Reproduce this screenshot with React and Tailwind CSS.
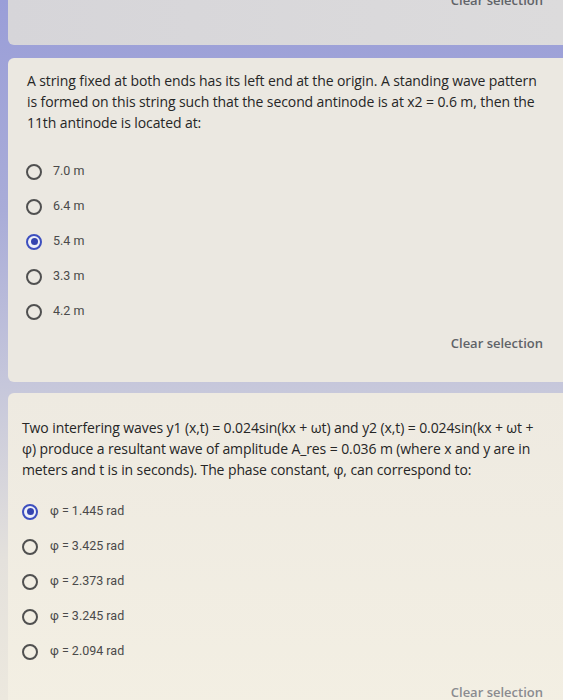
import React from "react";

const font = { fontFamily: '"Open Sans", "Liberation Sans", sans-serif' };

function Radio({ checked }) {
  if (checked) {
    return (
      <span className="flex h-[16px] w-[16px] shrink-0 items-center justify-center rounded-full border-2 border-[#3d4fbf] bg-[#eef0f8]">
        <span className="h-[7px] w-[7px] rounded-full bg-[#3444b0]" />
      </span>
    );
  }
  return <span className="h-[16px] w-[16px] shrink-0 rounded-full border-2 border-[#505050]" />;
}

function Option({ label, checked, gap }) {
  return (
    <div className={`flex h-[35px] items-center ${gap}`}>
      <Radio checked={checked} />
      <span className="text-[12.5px] text-[#4a4a4a] font-['Roboto',sans-serif]">{label}</span>
    </div>
  );
}

export default function App() {
  const q1 = ["7.0 m", "6.4 m", "5.4 m", "3.3 m", "4.2 m"];
  const q2 = ["φ = 1.445 rad", "φ = 3.425 rad", "φ = 2.373 rad", "φ = 3.245 rad", "φ = 2.094 rad"];
  return (
    <div
      className="h-[700px] w-[563px] overflow-hidden bg-[linear-gradient(to_bottom,#9a9ed8_0%,#a9acd8_30%,#c6c7db_55%,#e4e1dc_80%,#ece8de_100%)] pl-[8px]"
      style={font}
    >
      {/* top card */}
      <div className="flex h-[45px] justify-end rounded-bl-[6px] bg-[linear-gradient(to_right,#d6d5d9,#dcdbdc)] pr-[20px]">
        <span className="mt-[-10px] text-[13px] font-semibold leading-[20px] text-[#606368]">Clear selection</span>
      </div>
      <div className="h-[13px]" />
      {/* question 1 */}
      <div className="flex h-[324px] flex-col rounded-l-[6px] bg-[#ebe8e1] pt-[12px]">
        <p className="whitespace-nowrap pl-[19px] text-[14px] leading-[21px] tracking-[-0.1px] text-[#262626]">
          A string fixed at both ends has its left end at the origin. A standing wave pattern
          <br />
          is formed on this string such that the second antinode is at x2 = 0.6 m, then the
          <br />
          11th antinode is located at:
        </p>
        <div className="mt-[21px] flex flex-col pl-[18px]">
          {q1.map((l, i) => (
            <Option key={l} label={l} checked={i === 2} gap="gap-[11px]" />
          ))}
        </div>
        <div className="mt-[4px] flex justify-end pr-[20px]">
          <span className="text-[13px] font-semibold leading-[20px] text-[#5f6368]">Clear selection</span>
        </div>
      </div>
      <div className="h-[11px]" />
      {/* question 2 */}
      <div className="flex h-[320px] flex-col rounded-tl-[6px] bg-[linear-gradient(to_bottom,#eeeae1,#f3efe3)] pt-[24px]">
        <p className="whitespace-nowrap pl-[14px] text-[14px] leading-[21px] tracking-[-0.1px] text-[#262626]">
          Two interfering waves y1 (x,t) = 0.024sin(kx + ωt) and y2 (x,t) = 0.024sin(kx + ωt +
          <br />
          φ) produce a resultant wave of amplitude A_res = 0.036 m (where x and y are in
          <br />
          meters and t is in seconds). The phase constant, φ, can correspond to:
        </p>
        <div className="mt-[14px] flex flex-col pl-[14px]">
          {q2.map((l, i) => (
            <Option key={l} label={l} checked={i === 0} gap="gap-[12px]" />
          ))}
        </div>
        <div className="mt-[13px] flex justify-end pr-[20px]">
          <span className="text-[13px] font-semibold leading-[20px] text-[#8a8b90]">Clear selection</span>
        </div>
      </div>
    </div>
  );
}
